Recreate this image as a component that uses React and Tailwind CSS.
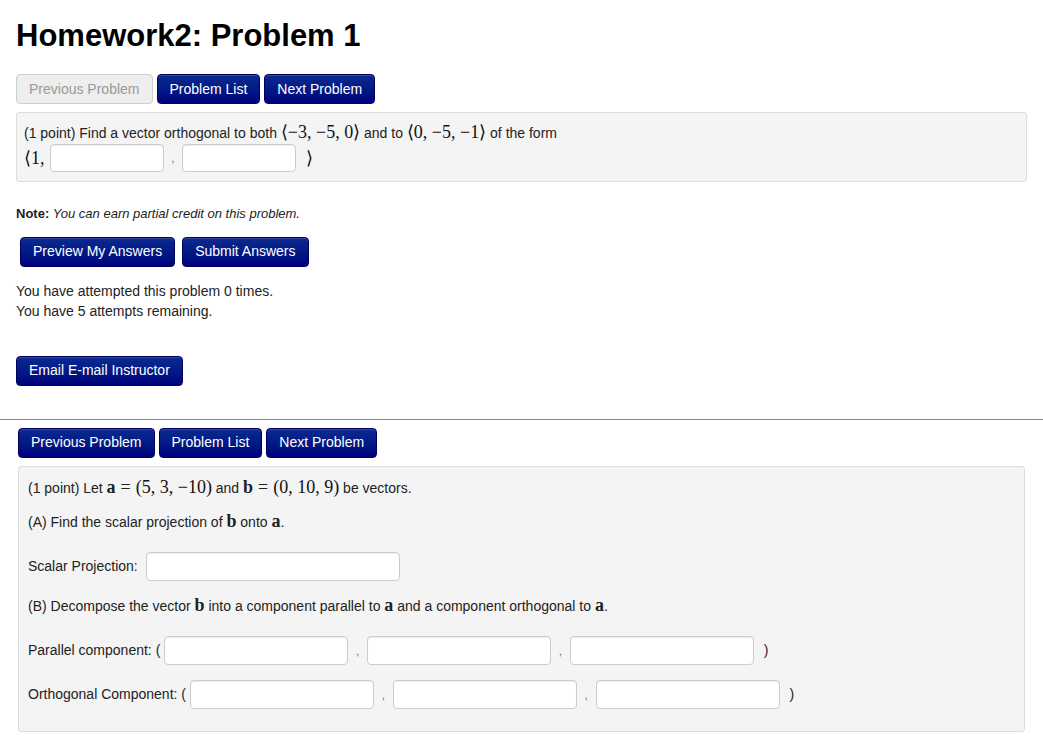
import React from 'react'

const navBtn =
  'inline-flex h-[30px] items-center rounded-[4px] border border-[#00005e] bg-gradient-to-b from-[#0d2a8f] to-[#00007c] px-[12px] text-[14px] text-white shadow-[inset_0_1px_0_rgba(255,255,255,0.15)]'

function NavButton({ children, className = '' }) {
  return <span className={`${navBtn} ${className}`}>{children}</span>
}

function Field({ w = 'w-[114px]', h = 'h-[28px]' }) {
  return (
    <span
      className={`inline-block ${w} ${h} rounded-[4px] border border-[#cccccc] bg-white align-middle shadow-[inset_0_1px_1px_rgba(0,0,0,0.075)]`}
    />
  )
}

// math set in a serif face, like the rendered TeX in the page
function M({ children }) {
  return (
    <span className="font-['Liberation_Serif',serif] text-[18px] text-[#111]">{children}</span>
  )
}

function B({ children }) {
  return <span className="font-['Liberation_Serif',serif] text-[18px] font-bold">{children}</span>
}

function Eq() {
  return <span className="mx-[5px] font-['Liberation_Serif',serif] text-[18px]">=</span>
}

function Comma() {
  return <span className="mx-[8px] self-end pb-[6px] text-[10px] text-[#555]">,</span>
}

export default function App() {
  return (
    <div className="min-h-[740px] bg-white font-['Liberation_Sans',Arial,sans-serif] text-[#111]">
      <div className="px-[16px]">
        <h1 className="pt-[15px] text-[31px] font-bold leading-[42px] text-black">
          Homework2: Problem 1
        </h1>

        <div className="mt-[17px] flex gap-[4px]">
          <span className="inline-flex h-[30px] items-center rounded-[4px] border border-[#cfcfcf] bg-[#eeeeee] px-[12px] text-[14px] text-[#999]">
            Previous Problem
          </span>
          <NavButton>Problem List</NavButton>
          <NavButton>Next Problem</NavButton>
        </div>

        <div className="mt-[8px] rounded-[3px] border border-[#dcdcdc] bg-[#f4f4f4] px-[7px] pb-[9px] pt-[9px] text-[14px] text-[#222]">
          <div className="leading-[21px]">
            (1 point) Find a vector orthogonal to both <M>⟨−3, −5, 0⟩</M> and to{' '}
            <M>⟨0, −5, −1⟩</M> of the form
          </div>
          <div className="flex items-center">
            <M>⟨1,</M>
            <span className="ml-[5px]">
              <Field />
            </span>
            <Comma />
            <Field />
            <span className="ml-[10px]">
              <M>⟩</M>
            </span>
          </div>
        </div>

        <div className="mt-[22px] text-[13px] text-[#222]">
          <b>Note:</b> <i>You can earn partial credit on this problem.</i>
        </div>

        <div className="ml-[4px] mt-[13px] flex gap-[7px]">
          <NavButton>Preview My Answers</NavButton>
          <NavButton>Submit Answers</NavButton>
        </div>

        <div className="mt-[14px] text-[14px] leading-[20px] text-[#222]">
          <div>You have attempted this problem 0 times.</div>
          <div>You have 5 attempts remaining.</div>
        </div>

        <div className="mt-[35px]">
          <NavButton>Email E-mail Instructor</NavButton>
        </div>
      </div>

      <hr className="mt-[33px] border-0 border-t border-[#8a8a8a]" />

      <div className="px-[18px]">
        <div className="mt-[8px] flex gap-[4px]">
          <NavButton>Previous Problem</NavButton>
          <NavButton>Problem List</NavButton>
          <NavButton>Next Problem</NavButton>
        </div>

        <div className="mt-[8px] rounded-[3px] border border-[#dcdcdc] bg-[#f4f4f4] px-[9px] pb-[22px] pt-[9px] text-[14px] text-[#222]">
          <div className="leading-[22px]">
            (1 point) Let <B>a</B>
            <Eq />
            <M>(5, 3, −10)</M> and <B>b</B>
            <Eq />
            <M>(0, 10, 9)</M> be vectors.
          </div>
          <div className="mt-[11px] leading-[22px]">
            (A) Find the scalar projection of <B>b</B> onto <B>a</B>.
          </div>
          <div className="mt-[19px] flex items-center">
            <span>Scalar Projection:</span>
            <span className="ml-[8px]">
              <Field w="w-[254px]" h="h-[29px]" />
            </span>
          </div>
          <div className="mt-[13px] leading-[22px]">
            (B) Decompose the vector <B>b</B> into a component parallel to <B>a</B> and a
            component orthogonal to <B>a</B>.
          </div>
          <div className="mt-[19px] flex items-center">
            <span>Parallel component: (</span>
            <span className="ml-[4px]">
              <Field w="w-[184px]" h="h-[29px]" />
            </span>
            <Comma />
            <Field w="w-[184px]" h="h-[29px]" />
            <Comma />
            <Field w="w-[184px]" h="h-[29px]" />
            <span className="ml-[10px]">)</span>
          </div>
          <div className="mt-[15px] flex items-center">
            <span>Orthogonal Component: (</span>
            <span className="ml-[4px]">
              <Field w="w-[184px]" h="h-[29px]" />
            </span>
            <Comma />
            <Field w="w-[184px]" h="h-[29px]" />
            <Comma />
            <Field w="w-[184px]" h="h-[29px]" />
            <span className="ml-[10px]">)</span>
          </div>
        </div>
      </div>
    </div>
  )
}
